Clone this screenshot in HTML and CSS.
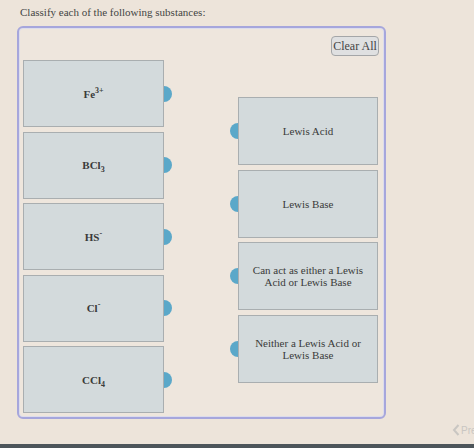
FILE: index.html
```html
<!DOCTYPE html>
<html>
<head>
<meta charset="utf-8">
<link rel="stylesheet" href="styles.css">
</head>
<body>
<div class="title">Classify each of the following substances:</div>
<div class="panel">
  <div class="panel-head">
    <button class="clear">Clear All</button>
  </div>
  <div class="panel-body">
    <div class="col-left">
      <div class="item"><span class="f">Fe<sup>3+</sup></span></div>
      <div class="item"><span class="f">BCl<sub>3</sub></span></div>
      <div class="item"><span class="f">HS<sup>-</sup></span></div>
      <div class="item"><span class="f">Cl<sup>-</sup></span></div>
      <div class="item"><span class="f">CCl<sub>4</sub></span></div>
    </div>
    <div class="col-right">
      <div class="target">Lewis Acid</div>
      <div class="target">Lewis Base</div>
      <div class="target">Can act as either a Lewis<br>Acid or Lewis Base</div>
      <div class="target">Neither a Lewis Acid or<br>Lewis Base</div>
    </div>
  </div>
</div>
<div class="footer">
  <span class="prev"><svg width="8" height="12" viewBox="0 0 8 12"><path d="M6.5 1 L2 6 L6.5 11" fill="none" stroke="#c9c6c2" stroke-width="2"/></svg>Pre</span>
</div>
<div class="bar"></div>
</body>
</html>
```
FILE: styles.css
```css
* { box-sizing: border-box; }
html, body { margin: 0; padding: 0; }
body {
  width: 474px;
  height: 448px;
  overflow: hidden;
  background: #ede4da;
  font-family: "Liberation Serif", "Times New Roman", serif;
  color: #3a3a3a;
}
.title {
  height: 26px;
  padding: 6px 0 0 20px;
  font-size: 11px;
  color: #444;
}
.panel {
  margin-left: 17px;
  width: 369px;
  height: 393px;
  border: 2px solid #a6a6dc;
  border-radius: 6px;
  box-shadow: inset 0 0 0 1px #dcdcec;
  background: #eee6dd;
  padding: 8px 5px 0 4px;
  display: flex;
  flex-direction: column;
}
.panel-head {
  display: flex;
  justify-content: flex-end;
  height: 24px;
}
.clear {
  width: 48px;
  height: 20px;
  padding: 0;
  font-family: "Liberation Serif", "Times New Roman", serif;
  font-size: 12px;
  color: #444;
  background: #dfe0e1;
  border: 1px solid #a4a6a8;
  border-radius: 4px;
}
.panel-body {
  display: flex;
  gap: 74px;
}
.col-left, .col-right {
  display: flex;
  flex-direction: column;
  gap: 4.5px;
}
.col-right { margin-top: 37px; }
.item, .target {
  position: relative;
  height: 67px;
  background: #d3dadc;
  border: 1px solid #a9aeb0;
  display: flex;
  align-items: center;
  justify-content: center;
  text-align: center;
  font-size: 11px;
  line-height: 12px;
  color: #3a3a3a;
}
.item { width: 141px; }
.target { width: 140px; height: 68px; }
.f { font-weight: bold; font-size: 11px; }
.f sup, .f sub { font-size: 8px; line-height: 0; }
.item::after {
  content: "";
  position: absolute;
  right: -9px;
  top: 50%;
  margin-top: -8px;
  width: 8px;
  height: 16px;
  border-radius: 0 8px 8px 0;
  background: #5ba8c9;
}
.target::before {
  content: "";
  position: absolute;
  left: -9px;
  top: 50%;
  margin-top: -8px;
  width: 8px;
  height: 16px;
  border-radius: 8px 0 0 8px;
  background: #5ba8c9;
}
.footer {
  height: 25px;
  padding: 3px 0 0 452px;
  white-space: nowrap;
  overflow: hidden;
}
.prev {
  display: inline-flex;
  align-items: center;
  gap: 1px;
  font-family: "Liberation Sans", Arial, sans-serif;
  font-size: 10px;
  color: #c9c6c2;
}
.bar {
  height: 4px;
  background: #4d555a;
}
```
